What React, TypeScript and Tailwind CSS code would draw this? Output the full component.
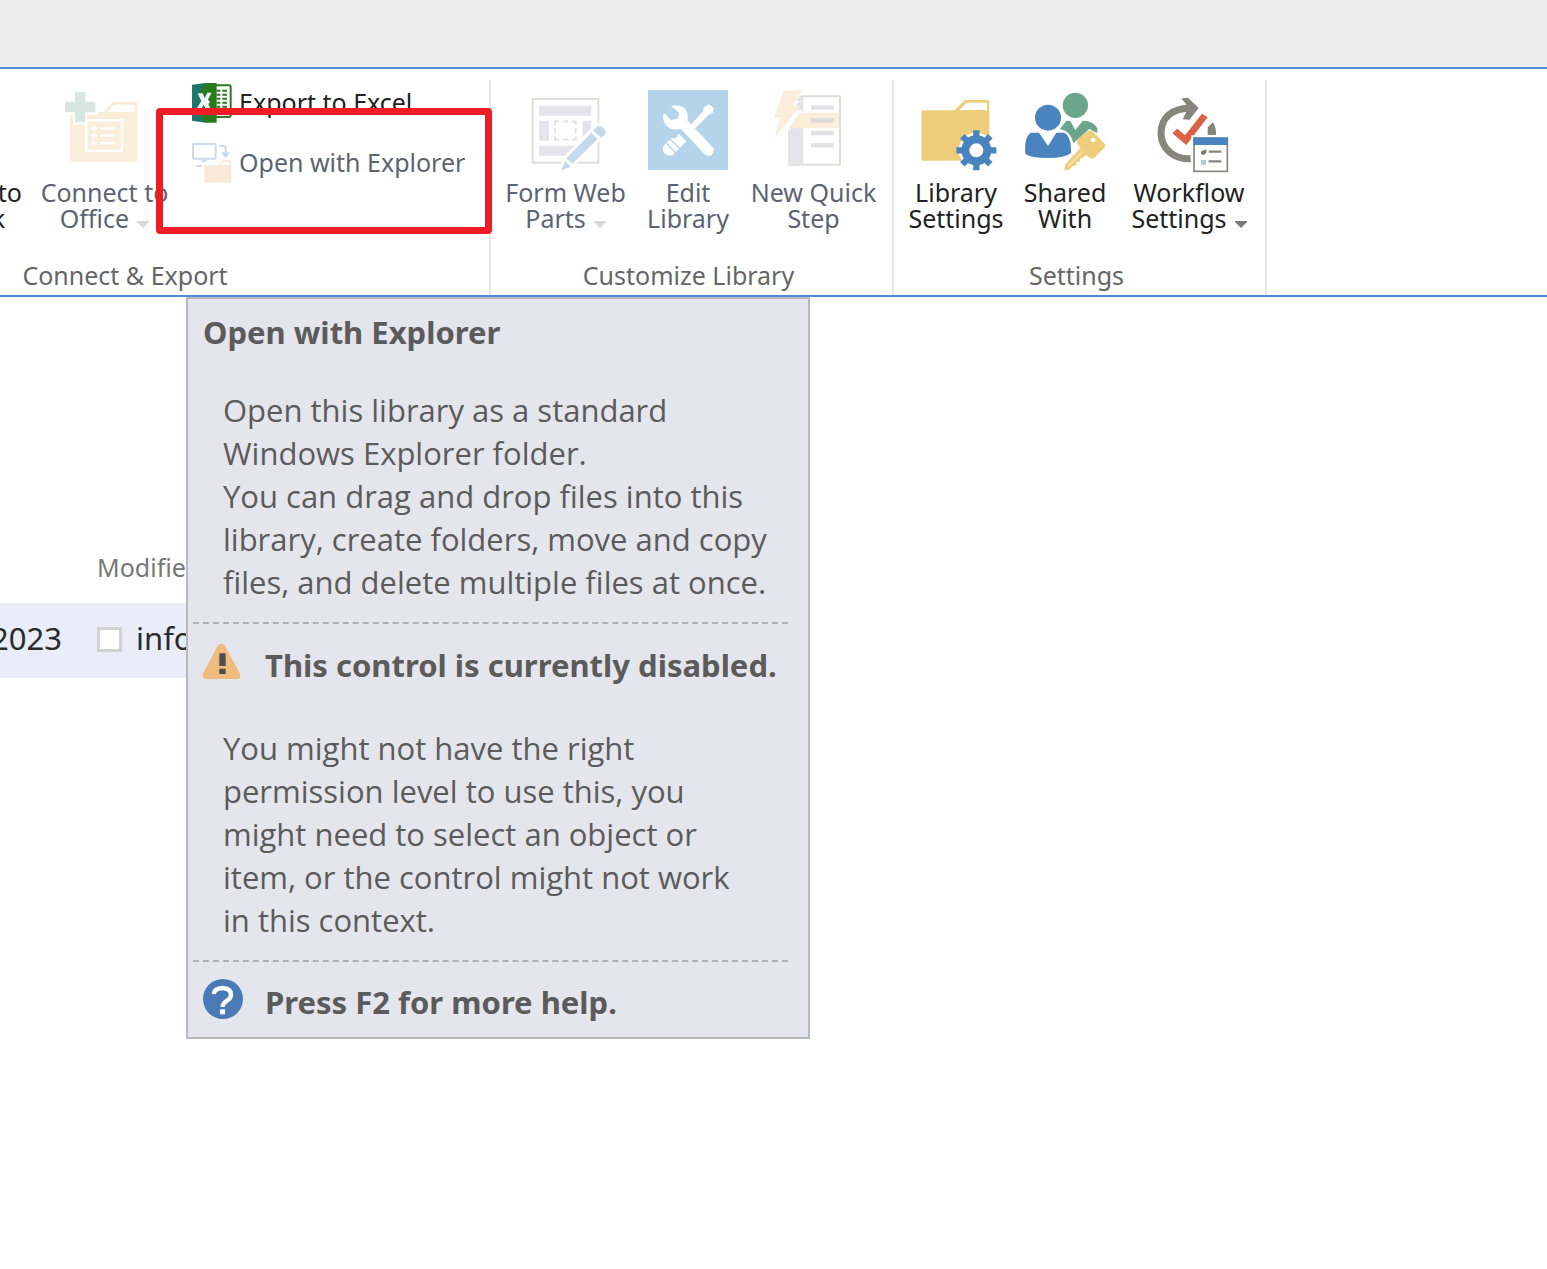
import type { ReactNode } from "react";

const svgBig = "block size-20 shrink-0 overflow-visible";
const svgSmall = "block size-10 shrink-0 overflow-visible";

function ConnectOfficeIcon() {
  return (
    <svg className={svgBig} viewBox="198 90 240 240" aria-hidden="true">
      <path d="M213 156H314L340 125H408Q416 125 416 134V306H213Z" fill="#faeeda" />
      <path d="M328 156L345 134H402Q407 134 407 140V156Z" fill="#fff" />
      <path d="M222 90H264V118H296V164H264V194H222V164H192V118H222Z" fill="#fff" />
      <path d="M228 96H259V125H289V157H259V187H228V157H198V125H228Z" fill="#d9e5e0" />
      <rect x="262" y="181" width="107" height="92" fill="none" stroke="#fff" strokeWidth="7" />
      <path d="M303 205H349M303 227H349M303 249H349" stroke="#fff" strokeWidth="7" />
      <path d="M276 205H294M276 227H294M276 249H294M285 197V213M285 219V235M285 241V257" stroke="#fff" strokeWidth="5" />
    </svg>
  );
}

function ExcelIcon() {
  return (
    <svg className={svgSmall} viewBox="126 39 120 120" aria-hidden="true">
      <rect x="185" y="46" width="57" height="95" rx="5" fill="#fff" stroke="#2c7a1f" strokeWidth="6" />
      <path d="M200 62H211M217 62H231M200 74H211M217 74H231M200 86H211M217 86H231M200 98H211M217 98H231M200 110H211M217 110H231M200 122H211M217 122H231" stroke="#2c7a1f" strokeWidth="6" />
      <path d="M126 44L166 39V158L126 152Z" fill="#21766c" />
      <path d="M166 39H200V158H166L150 130L180 96L152 66Z" fill="#2c7a1f" />
      <path d="M143 70H158L164 85L172 68H185L171 94L183 119H169L161 104L154 116H140L154 93Z" fill="#f1f6f3" />
    </svg>
  );
}

function ExplorerIcon() {
  return (
    <svg className={svgSmall} viewBox="126 219 120 120" aria-hidden="true">
      <rect x="129" y="222" width="68" height="44" rx="2" fill="none" stroke="#ccd9ea" strokeWidth="6" />
      <path d="M153 268H172L167 277H157ZM139 285H156V291H139Z" fill="#ccd9ea" />
      <path d="M208 228H219Q227 228 227 236V252" fill="none" stroke="#ccd9ea" strokeWidth="6" />
      <path d="M213 247H241L227 265Z" fill="#ccd9ea" />
      <path d="M163 285H206L217 271H244V338H163Z" fill="#fae9d9" />
      <path d="M211 284L220 277H239V284Z" fill="#fff" />
    </svg>
  );
}

function FormWebIcon() {
  return (
    <svg className={svgBig} viewBox="78 45 240 240" aria-hidden="true">
      <rect x="98" y="72" width="197" height="191" fill="none" stroke="#dfdfdc" strokeWidth="6" />
      <path d="M117 92H274V122H117ZM117 137H147V197H117ZM247 137H274V197H247ZM117 212H240V242H117Z" fill="#e4e4ea" />
      <path d="M162 139H177M188 139H205M216 139H230M162 194H177M188 194H205M216 194H230M165 137V150M165 158V175M165 184V196M227 137V150M227 158V175M227 184V196" stroke="#e0e0e0" strokeWidth="5" />
      <path d="M176 291L188 249L289 143Q301 140 312 150Q325 161 324 174L217 277Z" fill="#fff" />
      <path d="M199 250L274 173L293 193L217 266ZM279 167L289 156Q299 148 310 158Q321 168 316 178L305 188ZM195 258L212 275L184 286Z" fill="#c5d9ec" />
    </svg>
  );
}

function EditLibraryIcon() {
  return (
    <svg className={svgBig} viewBox="445 45 240 240" aria-hidden="true">
      <rect x="445" y="45" width="240" height="240" fill="#b3d4ea" />
      <path d="M627 88L642 98L639 114L625 121L583 164L571 152L610 109L612 97Z" fill="#fff" />
      <path d="M514 94Q535 85 554 99Q568 112 563 136L641 219Q645 232 635 240Q625 246 615 238L543 161Q518 169 501 153Q486 138 492 113L514 136L535 130L539 113Z" fill="#fff" />
      <path d="M538 176L560 199L519 241Q505 245 494 235Q485 222 493 211L515 190L527 190Z" fill="#fff" />
      <path d="M511 192L542 222M500 205L529 234" stroke="#b3d4ea" strokeWidth="4" />
    </svg>
  );
}

function QuickStepIcon() {
  return (
    <svg className={svgBig} viewBox="102 45 240 240" aria-hidden="true">
      <path d="M148 64H300V269H148Z" fill="#fff" stroke="#dededb" strokeWidth="6" />
      <path d="M151 67H190V266H151Z" fill="#e4e4ea" />
      <path d="M126 40H194L168 78H187V110L155 158L145 166H120L130 120H95Z" fill="#fff" />
      <path d="M163 98L180 76L190 80V104H163Z" fill="#e4e4ea" />
      <path d="M178 113H297V160H145Z" fill="#faeeda" />
      <path d="M132 46H187L155 92H182L104 188L120 126H102Z" fill="#faeeda" />
      <path d="M213 98H281M213 174H281M213 211H281" stroke="#e0e0e5" strokeWidth="13" />
      <path d="M213 136H281" stroke="#dcdad8" strokeWidth="13" />
    </svg>
  );
}

function LibrarySettingsIcon() {
  return (
    <svg className={svgBig} viewBox="48 45 240 240" aria-hidden="true">
      <path d="M70 106H163L194 75H261Q268 75 268 83V257H70Q64 257 64 250V112Q64 106 70 106Z" fill="#eece7b" />
      <path d="M178 106L200 83H257Q261 83 261 88V108L252 104Z" fill="#fff" />
      <circle cx="229" cy="226" r="53" fill="#fff" />
      <circle cx="229" cy="226" r="33" fill="none" stroke="#4984bf" strokeWidth="24" />
      <path d="M229 166V188M229 264V286M169 226H191M267 226H289M187 184L202 199M256 253L271 268M271 184L256 199M202 253L187 268" stroke="#4984bf" strokeWidth="19" />
    </svg>
  );
}

function SharedWithIcon() {
  return (
    <svg className={svgBig} viewBox="375 45 240 240" aria-hidden="true">
      <circle cx="526" cy="91" r="38" fill="#6ba58b" />
      <path d="M480 162L499 137L511 138L526 166L548 137Q581 137 592 160V174L568 162L520 205Q514 176 495 167Z" fill="#6ba58b" />
      <circle cx="444" cy="128" r="39" fill="#4984bf" />
      <path d="M376 236Q372 185 393 173H417L444 213L469 173H493Q511 182 513 220V234Q496 249 444 249Q394 249 376 236Z" fill="#4984bf" />
      <path d="M565 168Q571 164 579 170L613 205Q619 212 613 218L583 248Q576 253 569 248L557 239L548 250L541 249L540 259L530 261L527 272L517 274L506 286L493 284L496 268L541 219L531 205Q528 199 533 193Z" fill="#eece7b" />
      <circle cx="579" cy="195" r="7" fill="#fff" />
      <path d="M505 274L548 229" stroke="#f8e8bd" strokeWidth="4" />
    </svg>
  );
}

function WorkflowIcon() {
  return (
    <svg className={svgBig} viewBox="117 45 240 240" aria-hidden="true">
      <path d="M242 251C191 254 154 221 153 175C153 129 185 99 244 99" fill="none" stroke="#86867c" strokeWidth="21" />
      <path d="M214 70L234 68L266 99L238 134L218 133L230 108V90Z" fill="#86867c" />
      <path d="M293 180V157L309 142Q319 158 318 180Z" fill="#86867c" />
      <path d="M187 175L202 161L225 181L276 116L293 127L229 210Z" fill="#dc6045" />
      <rect x="244" y="181" width="114" height="116" fill="#fff" />
      <rect x="252" y="190" width="100" height="99" fill="#fff" stroke="#86867c" strokeWidth="5" />
      <rect x="250" y="187" width="104" height="23" fill="#4984bf" />
      <path d="M296 230H334M296 259H334" stroke="#86867c" strokeWidth="7" />
      <path d="M273 237V230L284 224H289V233L281 240Z" fill="#77776f" />
      <rect x="273" y="255" width="15" height="15" fill="#b8c9e6" />
    </svg>
  );
}

function WarningIcon() {
  return (
    <svg className={svgSmall} viewBox="69 96 120 120" aria-hidden="true">
      <path d="M113 107Q124 95 135 107L180 191Q184 207 172 207H78Q65 206 69 191Z" fill="#efbc7d" />
      <path d="M118 130H137V168H118ZM118 176H137V192H118Z" fill="#4d4d52" />
    </svg>
  );
}

function HelpIcon() {
  return (
    <svg className={svgSmall} viewBox="69 117 120 120" aria-hidden="true">
      <circle cx="129" cy="177" r="60" fill="#4a7ab6" />
      <path d="M101 162Q103 145 127 144Q153 145 153 164Q153 175 141 182Q128 190 128 201" fill="none" stroke="#fff" strokeWidth="13" />
      <rect x="120" y="208" width="15" height="15" fill="#fff" />
    </svg>
  );
}

function Caret({ muted = false }: { muted?: boolean }) {
  return (
    <svg className="mt-3 ml-2 inline-block h-[7px] w-3" viewBox="0 0 12 7" aria-hidden="true">
      <path d="M0 0H12V1L6 7L0 1Z" fill={muted ? "#d8d8da" : "#7b7b7b"} />
    </svg>
  );
}

type BigProps = { width: string; icon: ReactNode; disabled?: boolean; children: ReactNode };

function BigButton({ width, icon, disabled = false, children }: BigProps) {
  return (
    <button
      type="button"
      aria-disabled={disabled}
      className={`flex shrink-0 flex-col items-center pt-[10px] text-center text-[25px] leading-[26px] whitespace-nowrap ${width} ${disabled ? "text-[#5d6370]" : "text-[#222]"}`}
    >
      {icon}
      <span className="mt-[9px] flex flex-col items-center">{children}</span>
    </button>
  );
}

type GroupProps = { className: string; inset: string; label: string; children: ReactNode };

function Group({ className, inset, label, children }: GroupProps) {
  return (
    <section aria-label={label} className={`flex shrink-0 flex-col border-r-2 border-[#e5e5e5] ${className}`}>
      <div className={`flex h-[178px] items-start gap-[22px] ${inset}`}>{children}</div>
      <div className="h-[37px] pr-[6px] text-center text-[25px] leading-[34px] text-[#666]">{label}</div>
    </section>
  );
}

function Tooltip() {
  return (
    <div
      role="tooltip"
      className="absolute top-[297px] left-[186px] w-[624px] border-2 border-[#b9b9bd] bg-[#e5e5ee] pr-5 pb-[13px] pl-[5px] text-[31px] leading-[43px] whitespace-nowrap text-[#5b5b5b]"
    >
      <h2 className="pt-3 pl-[10px] font-bold">Open with Explorer</h2>
      <p className="mt-[35px] pb-[18px] pl-[30px] font-['Open_Sans',sans-serif]">
        Open this library as a standard
        <br />
        Windows Explorer folder.
        <br />
        You can drag and drop files into this
        <br />
        library, create folders, move and copy
        <br />
        files, and delete multiple files at once.
      </p>
      <div className="flex items-start gap-[22px] border-t-2 border-dashed border-[#b0b0b6] pt-[18px] pl-[10px] font-bold">
        <WarningIcon />
        <span className="pt-[2px]">This control is currently disabled.</span>
      </div>
      <p className="mt-10 pb-[18px] pl-[30px] font-['Open_Sans',sans-serif]">
        You might not have the right
        <br />
        permission level to use this, you
        <br />
        might need to select an object or
        <br />
        item, or the control might not work
        <br />
        in this context.
      </p>
      <div className="flex items-start gap-[22px] border-t-2 border-dashed border-[#b0b0b6] pt-[17px] pl-[10px] font-bold">
        <HelpIcon />
        <span className="pt-[2px]">Press F2 for more help.</span>
      </div>
    </div>
  );
}

export default function App() {
  return (
    <div className="relative min-h-screen overflow-hidden bg-white font-['Noto_Sans','Open_Sans',sans-serif]">
      <div className="h-[67px] bg-[#eee]" />
      <div className="flex border-y-2 border-[#4f8bdf] pt-[11px]">
        <Group className="-ml-[233px] w-[724px]" inset="pl-[132px]" label="Connect & Export">
          <BigButton width="w-[118px]" icon={<div className="size-20" />}>
            <span>Connect to</span>
            <span>Outlook</span>
          </BigButton>
          <BigButton width="w-[131px]" icon={<ConnectOfficeIcon />} disabled>
            <span>Connect to</span>
            <span className="flex items-center">
              Office <Caret muted />
            </span>
          </BigButton>
          <div className="flex flex-col gap-5 pt-[3px] text-[25px] leading-[38px] whitespace-nowrap">
            <button type="button" className="flex items-center gap-[7px] text-[#222]">
              <ExcelIcon />
              <span className="pb-[2px]">Export to Excel</span>
            </button>
            <button type="button" aria-disabled="true" className="flex items-center gap-[7px] text-[#5d6370]">
              <ExplorerIcon />
              <span className="pb-[2px]">Open with Explorer</span>
            </button>
          </div>
        </Group>
        <Group className="w-[403px]" inset="pl-[14px]" label="Customize Library">
          <BigButton width="w-[121px]" icon={<FormWebIcon />} disabled>
            <span>Form Web</span>
            <span className="flex items-center">
              Parts <Caret muted />
            </span>
          </BigButton>
          <BigButton width="w-20" icon={<EditLibraryIcon />} disabled>
            <span>Edit</span>
            <span>Library</span>
          </BigButton>
          <BigButton width="w-[127px]" icon={<QuickStepIcon />} disabled>
            <span>New Quick</span>
            <span>Step</span>
          </BigButton>
        </Group>
        <Group className="w-[373px]" inset="pl-[15px]" label="Settings">
          <BigButton width="w-[94px]" icon={<LibrarySettingsIcon />}>
            <span>Library</span>
            <span>Settings</span>
          </BigButton>
          <BigButton width="w-20" icon={<SharedWithIcon />}>
            <span>Shared</span>
            <span>With</span>
          </BigButton>
          <BigButton width="w-[124px]" icon={<WorkflowIcon />}>
            <span>Workflow</span>
            <span className="flex items-center">
              Settings <Caret />
            </span>
          </BigButton>
        </Group>
      </div>

      <table className="mt-[251px] w-1/2 table-fixed text-left whitespace-nowrap">
        <thead>
          <tr className="h-[55px] align-top text-[25px] leading-[38px] text-[#777]">
            <th className="w-[97px]" aria-label="Date" />
            <th className="font-normal">Modified By</th>
          </tr>
        </thead>
        <tbody>
          <tr className="h-[75px] bg-[#eaedf7] text-[31px] text-[#2b2b2b]">
            <td className="pb-[5px]">
              <span className="flex w-[62px] justify-end">4/12/2023</span>
            </td>
            <td className="pb-[3px]">
              <label className="flex items-center gap-[14px]">
                <input type="checkbox" className="size-[25px] appearance-none border-[3px] border-[#d2d2d2] bg-white" />
                <span className="pb-[2px]">info</span>
              </label>
            </td>
          </tr>
        </tbody>
      </table>

      <Tooltip />
      <div className="pointer-events-none absolute top-[108px] left-[156px] h-[126px] w-[336px] rounded-[4px] border-[7px] border-[#ee1c24]" />
    </div>
  );
}
